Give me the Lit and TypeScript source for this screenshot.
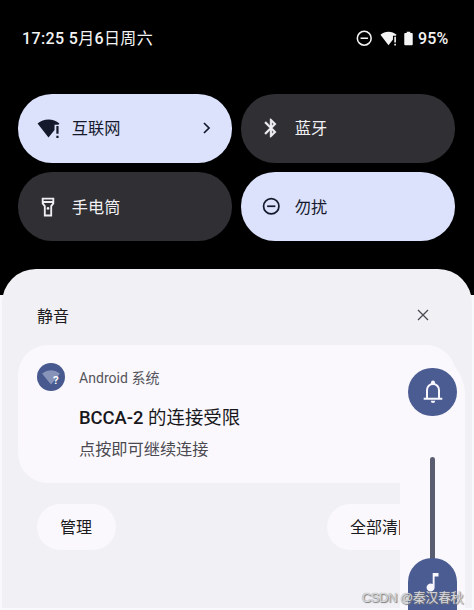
import { LitElement, html, css, svg } from "lit";
import { customElement, property } from "lit/decorators.js";
import { classMap } from "lit/directives/class-map.js";

const icons: Record<string, unknown> = {
  wifi: svg`<svg width="24" height="24" viewBox="0 0 24 24" fill="currentColor"><path d="M12 21.500.600 6.800C3.900 4 7.800 2.500 12 2.500S20.100 4 23.400 6.800L22.400 8H18.300V13.500Z"/><path d="M20.200 9.500h2.300v8h-2.300zM20.200 19.500h2.300v2.300h-2.300z"/></svg>`,
  bluetooth: svg`<svg width="24" height="24" viewBox="0 0 24 24" fill="currentColor"><path d="M17.710 7.710 12 2h-1v7.590L6.410 5 5 6.410 10.590 12 5 17.590 6.410 19 11 14.410V22h1l5.710-5.710-4.300-4.290 4.300-4.290zM13 5.830l1.880 1.880L13 9.590V5.830zm1.880 10.460L13 18.170v-3.760l1.880 1.880z" stroke="currentColor" stroke-width=".5"/></svg>`,
  torch: svg`<svg width="24" height="24" viewBox="0 0 24 24" fill="none" stroke="currentColor" stroke-width="2"><path d="M6.200 2.800h11.600v5.200l-2.300 3v10.300H8.500V11L6.200 8ZM6.200 6.500h11.600"/><circle cx="12" cy="13.500" r="1.500" fill="currentColor" stroke="none"/></svg>`,
  dnd: svg`<svg width="24" height="24" viewBox="0 0 24 24" fill="none" stroke="currentColor" stroke-width="2"><circle cx="12" cy="12" r="9"/><path d="M7.200 12h9.600"/></svg>`,
  battery: svg`<svg width="9" height="15" viewBox="0 0 10 16" fill="currentColor"><path d="M3 .5h4V2h1.700q1 0 1 1v11.500q0 1-1 1H1.300q-1 0-1-1V3q0-1 1-1H3z"/></svg>`,
  chevron: svg`<svg width="8" height="12" viewBox="0 0 8 12" fill="none" stroke="currentColor" stroke-width="1.700"><path d="m1 1 5 5-5 5"/></svg>`,
  close: svg`<svg width="12" height="12" viewBox="0 0 12 12" fill="none" stroke="currentColor" stroke-width="1.300"><path d="m1 1 10 10M11 1 1 11"/></svg>`,
  bell: svg`<svg width="24" height="26" viewBox="0 0 24 26" fill="none" stroke="currentColor" stroke-width="2"><path d="M2.700 19.700h18.600M6 19.500V11a6 6 0 0 1 12 0v8.500"/><path d="M10 5V3.500a2 2 0 0 1 4 0V5zM9.800 21.800h4.400a2.200 2.200 0 0 1-4.400 0z" fill="currentColor" stroke="none"/></svg>`,
  note: svg`<svg width="14" height="20" viewBox="0 0 14 20" fill="currentColor"><path d="M6.700 1H12.500v3.600H8.600v10.900a4 4 0 1 1-1.900-3.400z"/></svg>`,
};

@customElement("quick-tile")
class QuickTile extends LitElement {
  @property() icon = "";
  @property() label = "";
  @property({ type: Boolean }) active = false;
  @property({ type: Boolean }) more = false;
  static styles = css`
    :host { display: block; }
    .tile { box-sizing: border-box; height: 100%; border-radius: 34px; background: #303034; color: #f0f0f4;
      display: flex; align-items: center; padding: 0 21px 0 18px; }
    .active { background: #dce1fc; color: #141a2b; }
    .icon { width: 24px; height: 24px; flex: none; display: grid; place-items: center; }
    .icon svg { width: 22px; height: 22px; }
    .icon.wifi svg { width: 23px; height: 23px; }
    .icon.dnd svg { width: 20.500px; height: 20.500px; }
    .label { flex: 1; margin-left: 11.500px; padding-top: 2px; font-size: 16.200px; line-height: 24px; }
    .more { display: flex; }
  `;
  render() {
    return html`<div class=${classMap({ tile: true, active: this.active })}>
      <span class=${classMap({ icon: true, wifi: this.icon === "wifi", dnd: this.icon === "dnd" })}>${icons[this.icon]}</span>
      <span class="label">${this.label}</span>
      ${this.more ? html`<span class="more">${icons.chevron}</span>` : ""}
    </div>`;
  }
}

@customElement("app-root")
class AppRoot extends LitElement {
  static styles = css`
    :host { display: block; width: 474px; height: 610px; position: relative; overflow: hidden; background: #000;
      font-family: Roboto, "Noto Sans CJK SC", sans-serif; }
    * { box-sizing: border-box; }
    svg { display: block; }
    .status { height: 93.500px; padding: 27px 25.500px 0 22px; display: flex; justify-content: space-between; align-items: flex-start;
      color: #f4f4f4; font-size: 16px; line-height: 23px; font-weight: 500; white-space: nowrap; }
    .date { letter-spacing: .35px; }
    .date .zh { font-weight: 400; }
    .right { display: flex; align-items: center; height: 23px; }
    .right .dnd svg { width: 18.500px; height: 18.500px; }
    .right .dnd { margin-top: -1px; }
    .right .wifi { margin: 0 7px 0 6px; }
    .right .wifi svg { width: 17px; height: 17px; }
    .right .pct { margin-left: 5px; letter-spacing: .2px; }
    .tiles { display: grid; grid-template-columns: 214px 214px; grid-auto-rows: 69px; gap: 9.500px 9px; padding-left: 18.300px; }
    .shade { margin-top: 28px; height: 341px; padding: 0 2px 2px; background: linear-gradient(#000 26px, #f9f8fc 26px); }
    .sheet { height: 100%; border-radius: 34px 34px 0 0; background: #f1f0f4; padding: 0 16px; }
    .head { height: 76px; padding: 17px 27px 0 19px; display: flex; align-items: center; justify-content: space-between;
      font-size: 16px; color: #1c1b20; }
    .head .zh { margin-top: -2px; }
    .head .x { color: #4b4a50; margin-top: -1px; }
    .card { height: 138px; border-radius: 30px; background: #faf8fd; padding: 18px 0 0 19px; display: flex; }
    .badge { width: 28px; height: 28px; border-radius: 50%; background: #48598f; color: #8793b8; display: grid; place-items: center; position: relative; }
    .badge .q { position: absolute; left: 16px; top: 10px; color: #fff; font: 700 11.500px/14px Roboto, sans-serif; }
    .copy { margin-left: 14px; white-space: nowrap; }
    .app { font-size: 14px; line-height: 20px; margin-top: 5px; color: #55545b; letter-spacing: .05px; }
    .title { font-size: 18.400px; line-height: 26px; margin-top: 17px; color: #18171c; font-weight: 500; }
    .title .zh { font-weight: 400; }
    .body { font-size: 16.200px; line-height: 24px; margin-top: 7px; color: #4b4a50; }
    .actions { display: flex; justify-content: space-between; padding: 21px 19px 0; }
    .pill { height: 46px; border-radius: 23px; background: #faf8fd; width: 79px; padding-left: 23px; font-size: 16px; line-height: 48px; color: #1c1b20; white-space: nowrap; }
    .pill.wide { width: 110px; }
    .volume { position: absolute; left: 400px; top: 345px; width: 65px; height: 265px; background: #faf8fd; border-radius: 0 56px 0 0 / 0 50px 0 0;
      display: flex; flex-direction: column; align-items: center; padding-top: 22.500px; }
    .ring { width: 48.500px; height: 48.500px; flex: none; border-radius: 50%; background: #4b5c92; color: #f8f7ff; display: grid; place-items: center; }
    .track { width: 5px; height: 104px; flex: none; margin-top: 41px; border-radius: 3px 3px 0 0; background: #595d6f; }
    .level { width: 48.500px; flex: 1; margin-top: -3px; border-radius: 24px 24px 0 0; background: #4b5c92; color: #f8f7ff; display: flex; justify-content: center; padding-top: 14px; }
    .mark { position: absolute; right: 11px; bottom: 2px; font: 13px/20px "Liberation Sans", "Noto Sans CJK SC", sans-serif; letter-spacing: -.45px;
      color: rgba(226, 226, 230, .9); text-shadow: 1px 1px 1px #777, 0 0 1px #888; white-space: nowrap; }
  `;
  render() {
    return html`
      <div class="status">
        <span class="date">17:25 5<span class="zh">月</span>6<span class="zh">日周六</span></span>
        <span class="right"><span class="dnd">${icons.dnd}</span><span class="wifi">${icons.wifi}</span>${icons.battery}<span class="pct">95%</span></span>
      </div>
      <div class="tiles">
        <quick-tile icon="wifi" label="互联网" active more></quick-tile>
        <quick-tile icon="bluetooth" label="蓝牙"></quick-tile>
        <quick-tile icon="torch" label="手电筒"></quick-tile>
        <quick-tile icon="dnd" label="勿扰" active></quick-tile>
      </div>
      <div class="shade"><div class="sheet">
        <div class="head"><span class="zh">静音</span><span class="x">${icons.close}</span></div>
        <div class="card">
          <div class="badge"><svg width="20" height="17" viewBox="0 0 20 17" fill="currentColor"><path d="M1 4.500Q10-2 19 4.500L10 15.500z"/></svg><span class="q">?</span></div>
          <div class="copy">
            <div class="app">Android 系统</div>
            <div class="title">BCCA-2 <span class="zh">的连接受限</span></div>
            <div class="body">点按即可继续连接</div>
          </div>
        </div>
        <div class="actions"><div class="pill">管理</div><div class="pill wide">全部清除</div></div>
      </div></div>
      <div class="volume">
        <div class="ring">${icons.bell}</div>
        <div class="track"></div>
        <div class="level">${icons.note}</div>
      </div>
      <div class="mark">CSDN @秦汉春秋</div>
    `;
  }
}
